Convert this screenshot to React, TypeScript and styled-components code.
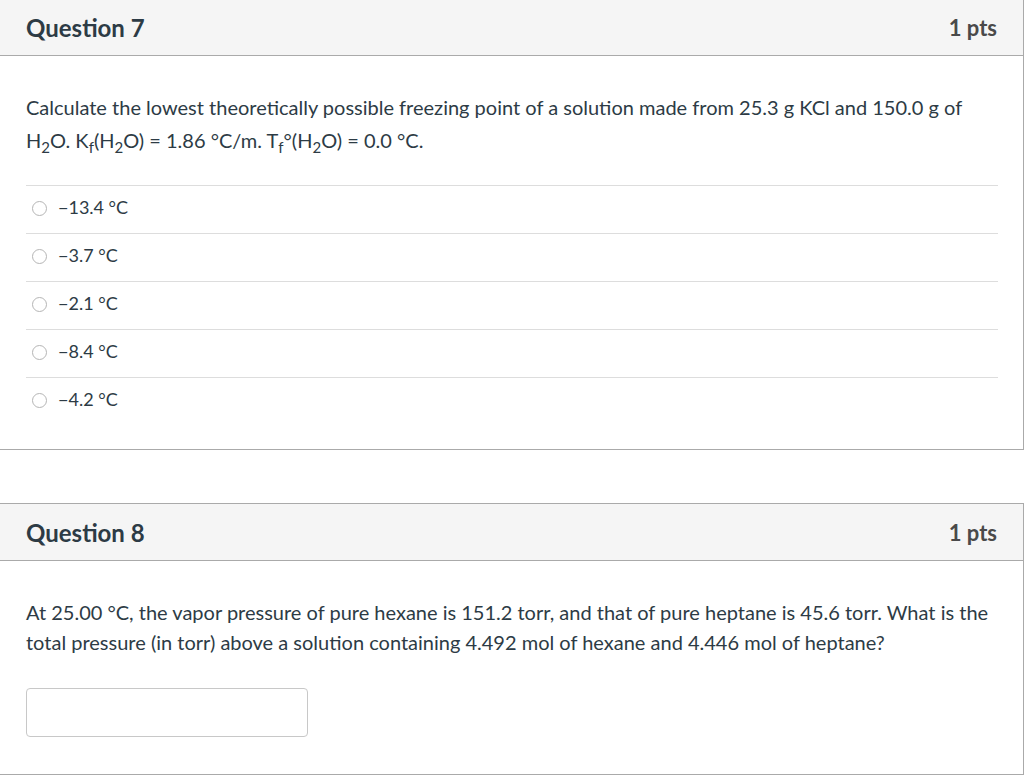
import React from 'react';
import styled, { createGlobalStyle } from 'styled-components';

const GlobalStyle = createGlobalStyle`
  body {
    margin: 0;
    background: #fff;
    font-family: Lato, "Noto Sans", "Liberation Sans", sans-serif;
    color: #2d3b45;
  }
`;

const Page = styled.div`
  width: 1024px;
  overflow: hidden;
`;

const Card = styled.section<{ $first?: boolean }>`
  border: 1px solid #aaa;
  border-left: none;
  margin-top: ${(p) => (p.$first ? '-2px' : '53px')};
  background: #fff;
`;

const Header = styled.header`
  height: 57px;
  box-sizing: border-box;
  border-bottom: 1px solid #aaa;
  background: #f5f5f5;
  display: flex;
  align-items: center;
  justify-content: space-between;
  padding: 0 26px 0 26px;
`;

const Title = styled.h2`
  margin: 0;
  font-size: 24px;
  font-weight: 700;
  color: #2d3b45;
`;

const Points = styled.span`
  font-size: 22px;
  font-weight: 700;
  color: #4a4a4a;
`;

const Body = styled.div<{ $top: number; $bottom: number }>`
  padding: ${(p) => p.$top}px 25px ${(p) => p.$bottom}px 26px;
`;

const Text = styled.p<{ $lh: number }>`
  margin: 0;
  font-size: 20px;
  line-height: ${(p) => p.$lh}px;

  sub {
    font-size: 0.75em;
    line-height: 0;
    vertical-align: -0.3em;
  }
`;

const Answers = styled.ul`
  list-style: none;
  margin: 28px 0 0;
  padding: 0;
`;

const Answer = styled.li`
  height: 48px;
  box-sizing: border-box;
  border-top: 1px solid #ddd;
  display: flex;
  align-items: center;
  gap: 11px;
  padding: 0 0 5px 6px;
  font-size: 18px;
`;

const Radio = styled.span`
  width: 15px;
  height: 15px;
  margin-top: 3px;
  box-sizing: border-box;
  border-radius: 50%;
  border: 1px solid #b5b5b5;
  background: #fff;
`;

const Input = styled.div`
  margin-top: 31px;
  width: 282px;
  height: 49px;
  box-sizing: border-box;
  border: 1px solid #c8c8c8;
  border-radius: 4px;
`;

const answers = ['−13.4 °C', '−3.7 °C', '−2.1 °C', '−8.4 °C', '−4.2 °C'];

function App() {
  return (
    <Page>
      <GlobalStyle />
      <Card $first>
        <Header>
          <Title>Question 7</Title>
          <Points>1 pts</Points>
        </Header>
        <Body $top={35} $bottom={24}>
          <Text $lh={33}>
            Calculate the lowest theoretically possible freezing point of a solution made from
            25.3 g KCl and 150.0 g of H<sub>2</sub>O. K<sub>f</sub>(H<sub>2</sub>O) = 1.86 °C/m.
            T<sub>f</sub>°(H<sub>2</sub>O) = 0.0 °C.
          </Text>
          <Answers>
            {answers.map((a) => (
              <Answer key={a}>
                <Radio />
                {a}
              </Answer>
            ))}
          </Answers>
        </Body>
      </Card>
      <Card>
        <Header>
          <Title>Question 8</Title>
          <Points>1 pts</Points>
        </Header>
        <Body $top={36} $bottom={37}>
          <Text $lh={30}>
            At 25.00 °C, the vapor pressure of pure hexane is 151.2 torr, and that of pure heptane
            is 45.6 torr. What is the total pressure (in torr) above a solution containing 4.492
            mol of hexane and 4.446 mol of heptane?
          </Text>
          <Input />
        </Body>
      </Card>
    </Page>
  );
}

export default App;
